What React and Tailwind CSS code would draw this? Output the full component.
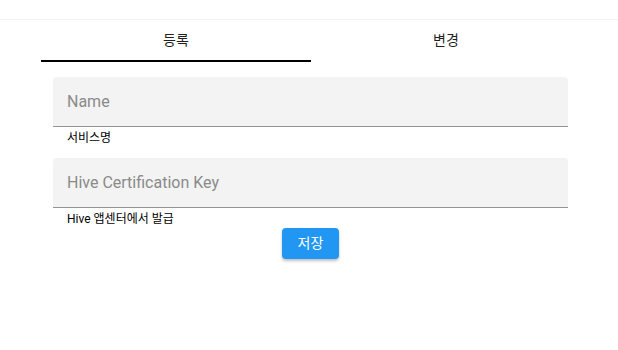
export default function App() {
  const font = { fontFamily: 'Roboto, "Noto Sans CJK KR", sans-serif' };
  return (
    <div className="w-[618px] h-[350px] bg-white font-['Roboto','Noto_Sans_CJK_KR',sans-serif]" style={font}>
      <div className="h-[20px] border-b border-[#f3f3f3]" />
      <div className="mx-[41px] w-[540px] flex">
        <button className="w-[270px] h-[42px] flex items-center justify-center text-[14px] text-[#1f1f1f] border-b-2 border-black pt-[1px]">
          등록
        </button>
        <button className="w-[270px] h-[42px] flex items-center justify-center text-[14px] text-[#1f1f1f] pt-[1px] border-b-2 border-transparent">
          변경
        </button>
      </div>
      <div className="mx-[53px] w-[515px] pt-[15px] flex flex-col">
        <div className="h-[50px] bg-[#f3f3f3] rounded-t-[4px] border-b border-[#949494] flex items-center px-[14px]">
          <span className="text-[16px] text-[#8a8a8a]">Name</span>
        </div>
        <div className="mt-[4px] px-[14px] text-[12px] leading-[14px] text-black h-[14px]">서비스명</div>
        <div className="mt-[13px] h-[50px] bg-[#f3f3f3] rounded-t-[4px] border-b border-[#949494] flex items-center px-[14px]">
          <span className="text-[16px] text-[#8a8a8a]">Hive Certification Key</span>
        </div>
        <div className="mt-[4px] px-[14px] text-[12px] leading-[14px] text-black h-[14px]">Hive 앱센터에서 발급</div>
        <div className="flex justify-center mt-[2px]">
          <button className="w-[57px] h-[31px] bg-[#2196f3] text-white text-[14px] rounded-[4px] shadow-[0_2px_3px_rgba(0,0,0,0.25)] flex items-center justify-center">
            저장
          </button>
        </div>
      </div>
    </div>
  );
}
